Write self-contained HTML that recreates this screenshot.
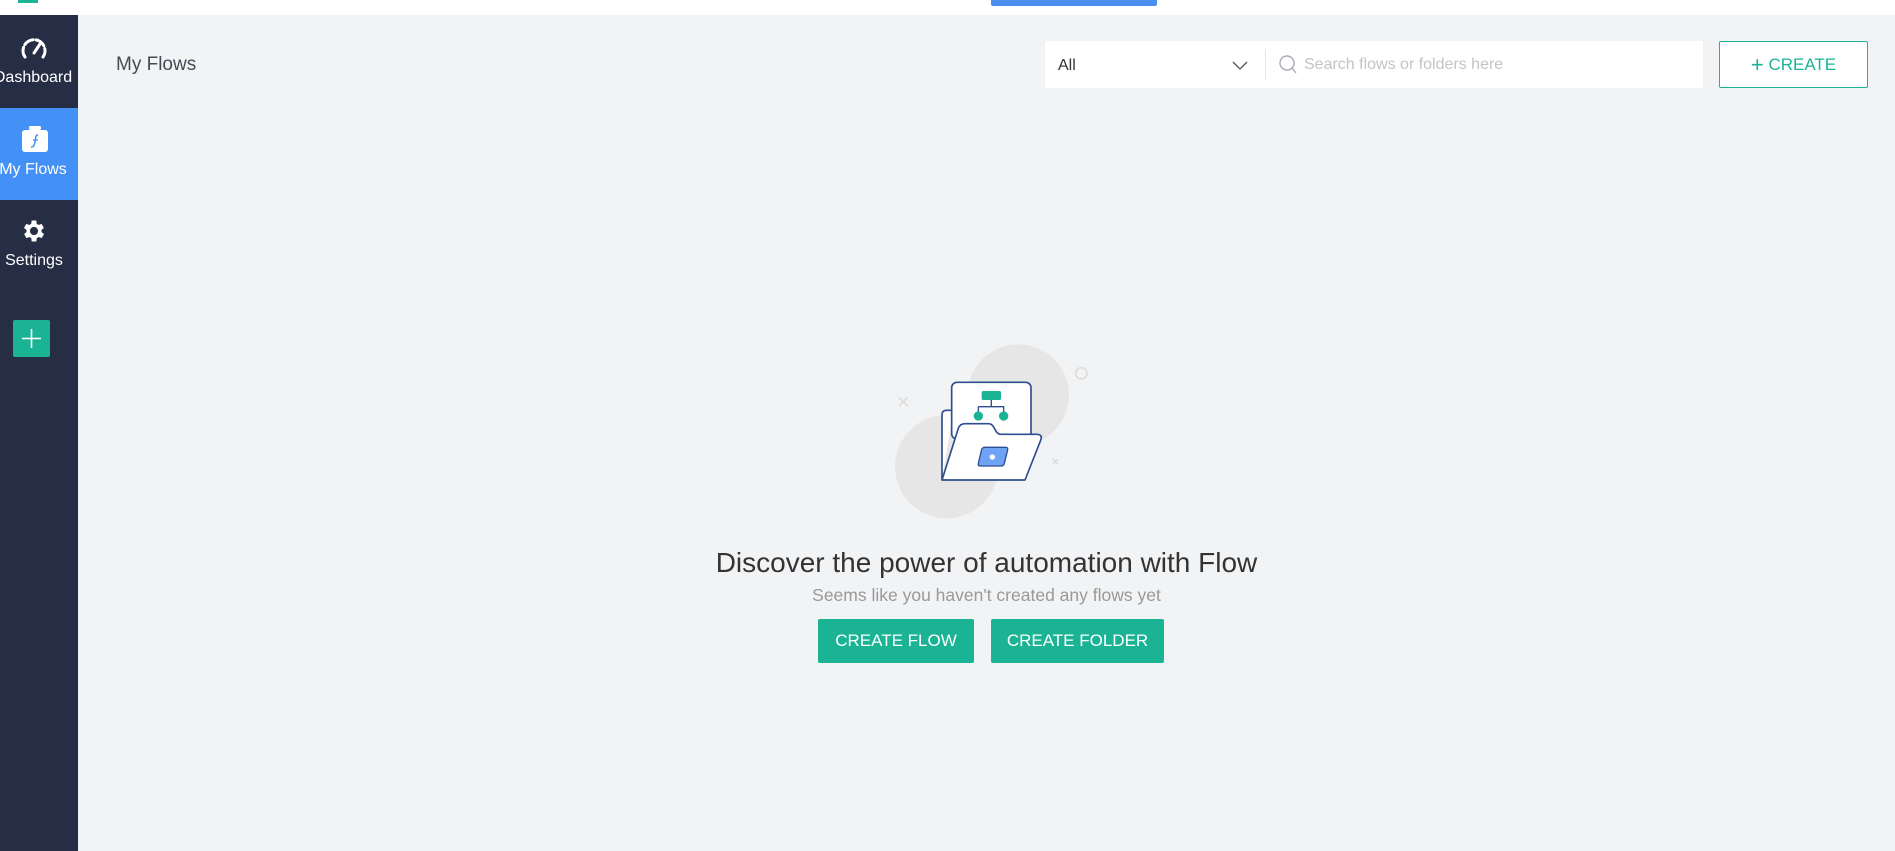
<!DOCTYPE html>
<html><head><style>
*{margin:0;padding:0;box-sizing:border-box}
body{width:1895px;height:851px;background:#f2f3f5;font-family:"Liberation Sans",sans-serif;position:relative;overflow:hidden}
.top{position:absolute;left:0;top:0;width:1895px;height:15px;background:#fff}
.blue{position:absolute;left:991px;top:0;width:166px;height:6px;background:#4a8ef0;border-radius:0 0 2px 2px}
.side{position:absolute;left:0;top:15px;width:78px;height:836px;background:#262e45;color:#fff}
.item{position:absolute;left:-5px;width:78px;text-align:center;font-size:16px}
.act{background:#4390f6;left:0}
.t{position:absolute;left:116px;top:54px;font-size:19px;color:#444b55}
.box{position:absolute;left:1045px;top:41px;width:658px;height:47px;background:#fff}
.cr{position:absolute;left:1719px;top:41px;width:149px;height:47px;border:1px solid #1ab394;border-radius:2px;background:#fff;color:#1ab394;font-size:17px;text-align:center;line-height:45px}
h1{position:absolute;left:78px;width:1817px;text-align:center;font-weight:400;top:547px;font-size:28px;color:#333}
.sub{position:absolute;left:78px;width:1817px;text-align:center;top:585px;font-size:17.5px;color:#999}
.btn{position:absolute;top:619px;height:44px;background:#1ab394;color:#fff;font-size:17px;text-align:center;line-height:44px;border-radius:2px}
</style></head><body>
<div class="top"></div><div class="blue"></div>
<div style="position:absolute;left:18px;top:0;width:20px;height:3px;background:#1ab394"></div>
<div class="side">
 <div class="item" style="top:0;height:93px">
  <svg width="30" height="26" viewBox="0 0 30 26" style="margin-top:20px"><path d="M6 22 A11 11 0 1 1 24 22" fill="none" stroke="#fff" stroke-width="3" stroke-linecap="round" stroke-dasharray="10 3"/><path d="M15 18 L21 9" stroke="#fff" stroke-width="3" stroke-linecap="round"/></svg>
  <div style="margin-top:3px;margin-left:-12px;width:100px;text-align:center">Dashboard</div>
 </div>
 <div class="item act" style="top:93px;height:92px;left:0;width:78px">
  <svg width="30" height="28" viewBox="0 0 30 28" style="margin-top:18px;margin-left:-8px"><rect x="2" y="4" width="26" height="22" rx="3" fill="#fff"/><rect x="9" y="0" width="12" height="4" rx="1.5" fill="#fff"/><path d="M18 9 C15 9 16 12 15 16 C14 21 13 21 11 21" fill="none" stroke="#4390f6" stroke-width="1.5"/><path d="M13 14h5" stroke="#4390f6" stroke-width="1.3"/></svg>
  <div style="margin-top:2px;margin-left:-12px">My Flows</div>
 </div>
 <div class="item" style="top:185px;height:90px">
  <svg width="28" height="28" viewBox="0 0 24 24" style="margin-top:17px"><path fill="#fff" d="M19.4 13a7.5 7.5 0 0 0 0-2l2.1-1.6-2-3.5-2.5 1a7 7 0 0 0-1.7-1L15 3h-4l-.4 2.9a7 7 0 0 0-1.7 1l-2.5-1-2 3.5L6.6 11a7.5 7.5 0 0 0 0 2l-2.1 1.6 2 3.5 2.5-1a7 7 0 0 0 1.7 1L11 21h4l.4-2.9a7 7 0 0 0 1.7-1l2.5 1 2-3.5zM13 15.5a3.5 3.5 0 1 1 0-7 3.5 3.5 0 0 1 0 7z" transform="translate(-1 0)"/></svg>
  <div style="margin-top:2px">Settings</div>
 </div>
 <div style="position:absolute;left:13px;top:305px;width:37px;height:37px;background:#1ab394;border-radius:2px"><svg width="37" height="37"><path d="M18.5 9v19M9 18.5h19" stroke="#fff" stroke-width="1.6"/></svg></div>
</div>
<div class="t">My Flows</div>
<div class="box">
 <span style="position:absolute;left:13px;top:16px;font-size:16px;color:#333">All</span>
 <svg style="position:absolute;left:187px;top:18px" width="16" height="12"><path d="M1 3l7 7 7-7" fill="none" stroke="#555" stroke-width="1.3"/></svg>
 <div style="position:absolute;left:220px;top:8px;width:1px;height:31px;background:#e5e5e5"></div>
 <svg style="position:absolute;left:233px;top:13px" width="20" height="22"><circle cx="9" cy="9" r="7" fill="none" stroke="#aab" stroke-width="1.4"/><path d="M14 14l4 5" stroke="#aab" stroke-width="1.4"/></svg>
 <span style="position:absolute;left:259px;top:15px;font-size:16px;color:#c4c4c4">Search flows or folders here</span>
</div>
<div class="cr"><span style="font-size:22px;vertical-align:-2px">+</span> CREATE</div>
<svg style="position:absolute;left:870px;top:330px" width="240" height="200" viewBox="0 0 720 600">
 <circle cx="445" cy="195" r="152" fill="#e6e6e6"/>
 <circle cx="230" cy="410" r="155" fill="#e6e6e6"/>
 <circle cx="634" cy="130" r="17" fill="none" stroke="#ddd" stroke-width="5"/>
 <path d="M87 202l26 26M113 202l-26 26M548 387l16 16M564 387l-16 16" stroke="#ddd" stroke-width="5"/>
 <path d="M216 450V255q0-14 14-14h20" fill="#fff" stroke="#2e4e8f" stroke-width="5"/>
 <rect x="245" y="157" width="238" height="170" rx="16" fill="#fff" stroke="#2e4e8f" stroke-width="5"/>
 <rect x="335" y="183" width="58" height="27" rx="5" fill="#1ab394"/>
 <path d="M364 210v20M325 230h76v20M325 230v20" fill="none" stroke="#2e4e8f" stroke-width="4"/>
 <circle cx="325" cy="258" r="14" fill="#1ab394"/><circle cx="401" cy="258" r="14" fill="#1ab394"/>
 <path d="M216 450L265 295q5-14 20-14h70q10 0 16 10l8 14q5 8 15 8h105q20 0 13 18L465 450Z" fill="#fff" stroke="#2e4e8f" stroke-width="5" stroke-linejoin="round"/>
 <path d="M335 358q3-6 10-6h62q8 0 6 8l-10 40q-2 8-10 8h-62q-8 0-6-8z" fill="#6fa3f5" stroke="#2e4e8f" stroke-width="4"/>
 <circle cx="367" cy="381" r="8" fill="#fff"/>
</svg>
<h1>Discover the power of automation with Flow</h1>
<div class="sub">Seems like you haven't created any flows yet</div>
<div class="btn" style="left:818px;width:156px">CREATE FLOW</div>
<div class="btn" style="left:991px;width:173px">CREATE FOLDER</div>
</body></html>
